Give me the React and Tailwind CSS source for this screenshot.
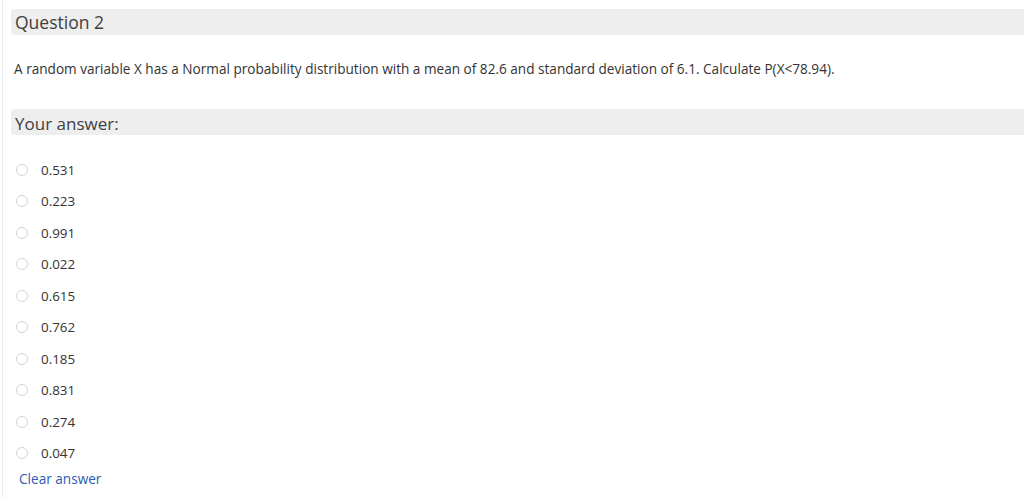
import React from 'react';

const options = ['0.531', '0.223', '0.991', '0.022', '0.615', '0.762', '0.185', '0.831', '0.274', '0.047'];

export default function App() {
    return (
        <div className="h-[498px] w-[1024px] overflow-hidden bg-white text-[#333]" style={{ fontFamily: '"Open Sans", sans-serif' }}>
            <div className="ml-[2px] h-full border-l border-[#ececec] pl-[8px] pt-[9px]">
                {/* Question header */}
                <div className="flex h-[26px] items-center rounded-l-[3px] bg-[#eeeeee] pl-[4px] pt-[2px] text-[17.5px] leading-none text-[#404040]">
                    Question 2
                </div>

                <p className="mt-[25px] pl-[3px] text-[13.6px] leading-[18px] text-[#333]">
                    A random variable X has a Normal probability distribution with a mean of 82.6 and standard deviation of 6.1. Calculate P(X&lt;78.94).
                </p>

                {/* Answer header */}
                <div className="mt-[31px] flex h-[26px] items-center rounded-l-[3px] bg-[#eeeeee] pl-[4px] pt-[2px] text-[17px] leading-none text-[#404040]">
                    Your answer:
                </div>

                <div className="mt-[19px] flex flex-col">
                    {options.map((o) => (
                        <label key={o} className="flex h-[31.5px] items-center">
                            <span className="ml-[5px] h-[12px] w-[12px] rounded-full border border-[#d4d4d4] bg-white" />
                            <span className="ml-[13px] text-[13.4px] text-[#333]">{o}</span>
                        </label>
                    ))}
                </div>

                <div className="mt-[0px] pl-[8px] text-[13.6px] text-[#2a5cb3]">Clear answer</div>
            </div>
        </div>
    );
}
